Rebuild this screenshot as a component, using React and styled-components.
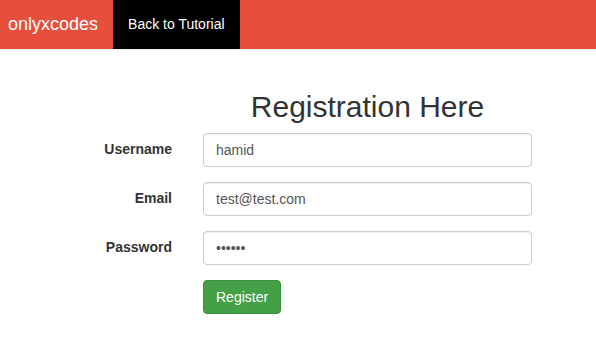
import { Fragment } from "react";
import styled, { createGlobalStyle } from "styled-components";

const GlobalStyle = createGlobalStyle`
  * { box-sizing: border-box; }
  body {
    margin: 0;
    background: #ffffff;
    font-family: "Liberation Sans", Arial, Helvetica, sans-serif;
    font-size: 14px;
    line-height: 1.42857;
    color: #333333;
  }
`;

const Navbar = styled.nav`
  display: flex;
  align-items: stretch;
  height: 50px;
  background: #e74f3d;
  border-bottom: 1px solid #e8eee8;
  margin-bottom: 20px;
`;

const Brand = styled.a`
  display: flex;
  align-items: center;
  padding: 0 15px 0 8px;
  font-size: 18px;
  color: #ffffff;
  text-decoration: none;
`;

const NavLink = styled.a`
  display: flex;
  align-items: center;
  padding: 0 15px;
  background: #000000;
  color: #ffffff;
  text-decoration: none;
`;

const Form = styled.form`
  display: grid;
  grid-template-columns: 172px 329px;
  column-gap: 31px;
  row-gap: 15px;
`;

const Heading = styled.h2`
  grid-column: 2;
  margin: 20px 0 -5px;
  font-size: 30px;
  font-weight: 500;
  line-height: 1.1;
  text-align: center;
  color: #333333;
`;

const Label = styled.label`
  padding-top: 7px;
  text-align: right;
  font-weight: 700;
`;

const Input = styled.input`
  width: 100%;
  height: 34px;
  padding: 6px 12px;
  font-family: inherit;
  font-size: 14px;
  color: #555555;
  background: #ffffff;
  border: 1px solid #cccccc;
  border-radius: 4px;
  box-shadow: inset 0 1px 1px rgba(0, 0, 0, 0.075);
  outline: none;
`;

const Button = styled.button`
  grid-column: 2;
  justify-self: start;
  height: 34px;
  padding: 6px 12px;
  font-family: inherit;
  font-size: 14px;
  color: #ffffff;
  background: #43a047;
  border: 1px solid #3b8e3f;
  border-radius: 4px;
  cursor: pointer;
`;

const fields = [
  { label: "Username", type: "text", value: "hamid" },
  { label: "Email", type: "text", value: "test@test.com" },
  { label: "Password", type: "password", value: "123456" },
];

const App = () => {
  return (
    <>
      <GlobalStyle />
      <Navbar>
        <Brand href="#">onlyxcodes</Brand>
        <NavLink href="#">Back to Tutorial</NavLink>
      </Navbar>
      <Form onSubmit={(e) => e.preventDefault()}>
        <Heading>Registration Here</Heading>
        {fields.map((f) => (
          <Fragment key={f.label}>
            <Label>{f.label}</Label>
            <Input type={f.type} defaultValue={f.value} />
          </Fragment>
        ))}
        <Button type="submit">Register</Button>
      </Form>
    </>
  );
};

export default App;
